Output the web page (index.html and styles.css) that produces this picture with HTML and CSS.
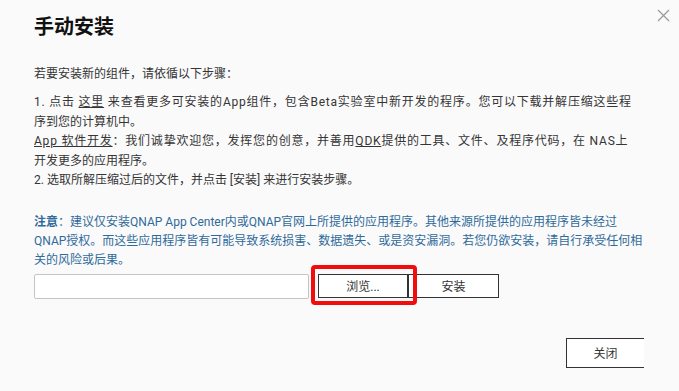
FILE: index.html
```html
<!DOCTYPE html>
<html lang="zh-CN">
<head>
<meta charset="utf-8">
<title>手动安装</title>
<link rel="stylesheet" href="styles.css">
</head>
<body>
<div class="dialog">
  <header class="header">
    <h1 class="title">手动安装</h1>
    <button class="close-x" aria-label="关闭">
      <svg width="13" height="13" viewBox="0 0 13 13"><path d="M1 1 L12 12 M12 1 L1 12" stroke="#9a9a9a" stroke-width="1.2" fill="none"/></svg>
    </button>
  </header>
  <div class="content">
    <p class="intro">若要安装新的组件，请依循以下步骤：</p>
    <div class="steps">
      <p><span class="fill">1. 点击 <a class="link" href="#">这里</a> 来查看更多可安装的App组件，包含Beta实验室中新开发的程序。您可以下载并解压缩这些程</span><br>序到您的计算机中。</p>
      <p><span class="fill"><a class="link" href="#">App 软件开发</a>：我们诚挚欢迎您，发挥您的创意，并善用<a class="link" href="#">QDK</a>提供的工具、文件、及程序代码，在 NAS上</span><br>开发更多的应用程序。</p>
      <p>2. 选取所解压缩过后的文件，并点击 [安装] 来进行安装步骤。</p>
    </div>
    <p class="notice"><b>注意</b>：建议仅安装QNAP App Center内或QNAP官网上所提供的应用程序。其他来源所提供的应用程序皆未经过QNAP授权。而这些应用程序皆有可能导致系统损害、数据遗失、或是资安漏洞。若您仍欲安装，请自行承受任何相关的风险或后果。</p>
    <div class="file-row">
      <div class="file-input"></div>
      <button class="btn browse">浏览...</button>
      <button class="btn install">安装</button>
    </div>
  </div>
  <footer class="footer">
    <button class="btn close-btn">关闭</button>
  </footer>
</div>
</body>
</html>
```
FILE: styles.css
```css
* { box-sizing: border-box; }
html, body {
  margin: 0;
  padding: 0;
  background: #fafafa;
}
body {
  font-family: Roboto, "Noto Sans CJK SC", sans-serif;
  color: #353535;
  font-size: 12px;
}
.dialog {
  width: 679px;
  height: 391px;
  padding: 0 0 0 34px;
  position: relative;
}
.header {
  display: flex;
  align-items: center;
  padding-top: 13px;
}
.title {
  margin: 0;
  font-size: 20px;
  line-height: 28px;
  font-weight: bold;
  color: #111;
}
.close-x {
  position: absolute;
  top: 9px;
  left: 657px;
  width: 13px;
  height: 13px;
  padding: 0;
  border: 0;
  background: none;
  display: block;
}
.close-x svg { display: block; }
.content {
  width: 612px;
}
.content p { margin: 0; }
.intro {
  margin-top: 24px !important;
  line-height: 19px;
}
.steps {
  margin-top: 9px;
  line-height: 19.5px;
  white-space: normal;
}
.steps .fill {
  letter-spacing: 0.78px;
}
.link {
  color: inherit;
  text-decoration: underline;
}
.notice {
  margin-top: 22px !important;
  line-height: 19px;
  color: #2f6a9b;
}
.notice b { font-weight: bold; }
.file-row {
  display: flex;
  align-items: flex-start;
  margin-top: 4px;
}
.file-input {
  width: 275px;
  height: 25px;
  background: #fff;
  border: 1px solid #c4c4c4;
  border-radius: 2px;
}
.btn {
  font-family: Roboto, "Noto Sans CJK SC", sans-serif;
  font-size: 12px;
  color: #333;
  background: #fff;
  border: 1px solid #333;
  padding: 0;
  height: 24px;
  border-radius: 0;
}
.browse {
  margin-left: 9px;
  width: 90px;
  position: relative;
  z-index: 1;
}
.browse::after {
  content: "";
  position: absolute;
  top: -10px;
  bottom: -8px;
  left: -8px;
  right: -10px;
  border: 4px solid #f20c0c;
  border-radius: 4px;
}
.install {
  width: 91px;
}
.footer {
  display: flex;
  justify-content: flex-end;
  width: 610px;
  margin-top: 39px;
}
.close-btn {
  width: 78px;
  height: 30px;
  border-right: 0;
}
```
